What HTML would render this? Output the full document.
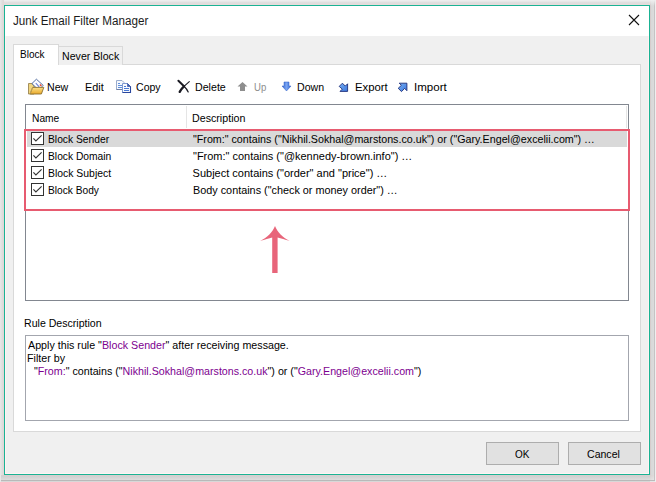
<!DOCTYPE html>
<html><head><meta charset="utf-8"><style>
html,body{margin:0;padding:0;}
body{width:656px;height:482px;position:relative;overflow:hidden;background:#e6e6e6;font-family:"Liberation Sans", sans-serif;}
.a{position:absolute;}
.t{position:absolute;white-space:pre;font-family:"Liberation Sans", sans-serif;}
</style></head><body>
<!-- shadow bands -->
<div class="a" style="left:0;top:0;width:656px;height:482px;background:#e4e4e4;"></div>
<div class="a" style="left:0;top:0;width:656px;height:5px;background:linear-gradient(#efefef,#ebebeb 20%,#e3e3e3 40%,#dcdcdc 60%,#e6dcdc 80%);"></div>
<div class="a" style="left:0;top:0;width:4px;height:482px;background:linear-gradient(90deg,#e8e8e8,#e4e4e4 25%,#dfdfdf 50%,#e0d8d8 75%);"></div>
<div class="a" style="left:650px;top:0;width:6px;height:482px;background:linear-gradient(90deg,#d6cccc 0,#d6cccc 16%,#d8d8d8 16%,#dcdcdc 66%,#c4c4c4 66%,#c4c4c4 83%,#efefef 83%);"></div>
<div class="a" style="left:650px;top:0;width:6px;height:6px;background:linear-gradient(rgba(239,239,239,1),rgba(239,239,239,0));"></div>
<div class="a" style="left:0;top:475px;width:650px;height:7px;background:linear-gradient(#d8cfcf 0,#d8cfcf 14%,#d0d0d0 14%,#d6d6d6 43%,#dcdcdc 71%,#b9b9b9 71%,#b9b9b9 86%,#d8d8d8 86%);"></div>
<div class="a" style="left:650px;top:475px;width:4px;height:5px;background:linear-gradient(135deg,#d8d0d0,#e6e6e6);"></div>
<div class="a" style="left:650px;top:480px;width:5px;height:1px;background:#bbbbbb;"></div>
<div class="a" style="left:650px;top:481px;width:6px;height:1px;background:#e6e6e6;"></div>
<div class="a" style="left:655px;top:475px;width:1px;height:7px;background:#f0f0f0;"></div>
<div class="a" style="left:0;top:475px;width:1px;height:7px;background:#e8e8e8;"></div>
<!-- window -->
<div class="a" style="left:4px;top:5px;width:644px;height:468px;border:1px solid #1ab394;background:#f0f0f0;"></div>
<div class="a" style="left:5px;top:6px;width:642px;height:466px;border:1px solid #fff3f3;"></div>
<div class="a" style="left:5px;top:6px;width:644px;height:30px;background:#fff;"></div>
<!-- tab panel -->
<div class="a" style="left:13px;top:64px;width:626px;height:366px;border:1px solid #d9d9d9;background:#fff;"></div>
<!-- never block tab -->
<div class="a" style="left:58px;top:46px;width:63px;height:18px;border:1px solid #d9d9d9;border-bottom:none;background:#f0f0f0;"></div>
<!-- block tab (selected) -->
<div class="a" style="left:13px;top:44px;width:44px;height:20px;border:1px solid #d9d9d9;border-bottom:none;background:#fff;"></div>
<!-- list box -->
<div class="a" style="left:25px;top:104px;width:602px;height:195px;border:1px solid #828790;background:#fff;"></div>
<div class="a" style="left:186px;top:106px;width:1px;height:22px;background:#e5e5e5;"></div>
<div class="a" style="left:626px;top:106px;width:1px;height:22px;background:#e5e5e5;"></div>
<!-- selected row -->
<div class="a" style="left:27px;top:131px;width:600px;height:16px;background:#d9d9d9;"></div>
<!-- red highlight -->
<div class="a" style="left:24px;top:129px;width:602px;height:78px;border:2px solid #e75b70;"></div>
<!-- rule description box -->
<div class="a" style="left:25px;top:335px;width:602px;height:84px;border:1px solid #a3a6ae;background:#fff;"></div>
<!-- buttons -->
<div class="a" style="left:486px;top:442px;width:71px;height:21px;border:1px solid #adadad;background:#e1e1e1;"></div>
<div class="a" style="left:568px;top:442px;width:71px;height:21px;border:1px solid #adadad;background:#e1e1e1;"></div>
<svg class="a" style="left:31px;top:132px" width="13" height="13" viewBox="0 0 13 13"><rect x="0.5" y="0.5" width="12" height="12" fill="#fff" stroke="#333" stroke-width="1"/><path d="M2.4 6.4 L4.9 9 L10.6 3.3" fill="none" stroke="#333" stroke-width="1.15"/></svg>
<svg class="a" style="left:31px;top:149px" width="13" height="13" viewBox="0 0 13 13"><rect x="0.5" y="0.5" width="12" height="12" fill="#fff" stroke="#333" stroke-width="1"/><path d="M2.4 6.4 L4.9 9 L10.6 3.3" fill="none" stroke="#333" stroke-width="1.15"/></svg>
<svg class="a" style="left:31px;top:166px" width="13" height="13" viewBox="0 0 13 13"><rect x="0.5" y="0.5" width="12" height="12" fill="#fff" stroke="#333" stroke-width="1"/><path d="M2.4 6.4 L4.9 9 L10.6 3.3" fill="none" stroke="#333" stroke-width="1.15"/></svg>
<svg class="a" style="left:31px;top:183px" width="13" height="13" viewBox="0 0 13 13"><rect x="0.5" y="0.5" width="12" height="12" fill="#fff" stroke="#333" stroke-width="1"/><path d="M2.4 6.4 L4.9 9 L10.6 3.3" fill="none" stroke="#333" stroke-width="1.15"/></svg>

<!-- New: folder with envelope -->
<svg class="a" style="left:26px;top:77px" width="20" height="20" viewBox="0 0 20 20">
 <defs><linearGradient id="gf" x1="0" y1="0" x2="0" y2="1"><stop offset="0" stop-color="#fbe08a"/><stop offset="1" stop-color="#e9a92a"/></linearGradient></defs>
 <path d="M2.5 6.5 L6.5 6.5 L7.5 7.5 L8 7.5 L8 17 L2.5 17 Z" fill="#f1d67e" stroke="#9c8650" stroke-width="0.9"/>
 <path d="M10.4 2.2 L17.2 8.4 L12.6 13 L5.9 6.6 Z" fill="#fbfcff" stroke="#34548f" stroke-width="0.85"/>
 <path d="M9.8 6.2 L13.2 9.8" stroke="#6e84d6" stroke-width="1.2"/>
 <path d="M13.9 7.6 L15.4 9" stroke="#e2452f" stroke-width="1.4"/>
 <path d="M4.1 17 L15.4 17 L17.8 10.4 L6.6 10.4 Z" fill="url(#gf)" stroke="#8d7130" stroke-width="0.9"/>
 <path d="M6.6 10.4 L4 16.8" stroke="#c9a860" stroke-width="0.8"/>
</svg>
<!-- Copy -->
<svg class="a" style="left:112px;top:77px" width="24" height="20" viewBox="0 0 24 20">
 <path d="M4.5 12.5 V3.5 H10 L12 5.5 V12.5 Z" fill="#f5f8fd" stroke="#9aaccc" stroke-width="1"/>
 <path d="M4.5 12.5 H10.5" stroke="#6d7fa6" stroke-width="1"/>
 <path d="M6 6.5 H8 M6 8.5 H10.5 M6 10.5 H10.5" stroke="#5f8fdc" stroke-width="1"/>
 <path d="M10.5 15.5 V6.5 H15.5 L18.5 9.5 V15.5 Z" fill="#f8fafe" stroke="#7e98d0" stroke-width="1"/>
 <path d="M10.5 15.5 H18.5 V9.5" fill="none" stroke="#2a479e" stroke-width="1.1"/>
 <path d="M15.5 6.5 V9.5 H18.5 Z" fill="#3a5cb0" stroke="#2a479e" stroke-width="0.6"/>
 <path d="M12 9.5 H14 M12 11.5 H17 M12 13.5 H17" stroke="#4a7ad6" stroke-width="1"/>
</svg>
<!-- Delete X -->
<svg class="a" style="left:174px;top:77px" width="20" height="20" viewBox="0 0 20 20">
 <path d="M4.4 3.8 L10 9.3" stroke="#1a1a22" stroke-width="2" fill="none" stroke-linecap="round"/>
 <path d="M10 9.3 C11.8 11 13.2 12.8 14.2 15" stroke="#1a1a22" stroke-width="1.2" fill="none" stroke-linecap="round"/>
 <path d="M15.3 4.6 L10 9.3" stroke="#1a1a22" stroke-width="1.1" fill="none" stroke-linecap="round"/>
 <path d="M10 9.3 C8.3 10.8 6.8 12.8 5.7 14.9" stroke="#1a1a22" stroke-width="2.3" fill="none" stroke-linecap="round"/>
</svg>
<!-- Up gray -->
<svg class="a" style="left:237px;top:81px" width="11" height="11" viewBox="0 0 11 11">
 <path d="M5.5 1 L10.5 5.5 L8 5.5 L8 10 L3 10 L3 5.5 L0.5 5.5 Z" fill="#8e8e8e"/>
</svg>
<!-- Down blue -->
<svg class="a" style="left:282px;top:81px" width="10" height="11" viewBox="0 0 10 11">
 <defs><linearGradient id="gd" x1="0" y1="0" x2="1" y2="0"><stop offset="0" stop-color="#3565cf"/><stop offset="0.5" stop-color="#78a4f2"/><stop offset="1" stop-color="#3565cf"/></linearGradient></defs>
 <path d="M2 1 H7 V5 H9 L4.5 10 L0 5 H2 Z" fill="url(#gd)" stroke="#2f5fc4" stroke-width="0.5"/>
</svg>
<!-- Export -->
<svg class="a" style="left:338px;top:82px" width="12" height="12" viewBox="0 0 12 12">
 <defs><linearGradient id="ge" x1="0" y1="0" x2="1" y2="1"><stop offset="0" stop-color="#78b0f4"/><stop offset="1" stop-color="#3a76dc"/></linearGradient></defs>
 <path d="M1.2 4.4 L4.4 1.2 L7.3 4.1 L9.6 1.8 L9.6 9.4 L2 9.4 L4.3 7.1 Z" fill="url(#ge)" stroke="#1f2f78" stroke-width="0.9" stroke-linejoin="miter"/>
</svg>
<!-- Import -->
<svg class="a" style="left:397px;top:82px" width="12" height="12" viewBox="0 0 12 12">
 <path d="M2.2 1.2 L9.9 1.2 L9.9 8.7 L7.6 6.4 L4.5 9.6 L1.2 6.3 L4.4 3.3 Z" fill="url(#ge)" stroke="#1f2f78" stroke-width="0.9"/>
</svg>
<!-- close X -->
<svg class="a" style="left:628px;top:14px" width="12" height="12" viewBox="0 0 12 12">
 <path d="M1 1 L11 11 M11 1 L1 11" stroke="#111" stroke-width="1.1"/>
</svg>
<!-- red arrow -->
<svg class="a" style="left:255px;top:222px" width="40" height="56" viewBox="0 0 40 56">
 <path d="M20 4 C17.5 10 12.5 15.5 5.2 18.8 C10 17.8 14 16 17.2 15.4 L17.2 51 L22.6 51 L22.6 15.4 C26 16 30 17.8 34.6 18.8 C27.5 15.5 22.5 10 20 4 Z" fill="#e8657a"/>
</svg>
<div class="t" style="left:13.00px;top:15.34px;font-size:12px;line-height:12px;color:#1b1b1b;transform:scaleX(0.9710);transform-origin:0 0;">Junk Email Filter Manager</div>
<div class="t" style="left:20.00px;top:48.69px;font-size:11px;line-height:11px;color:#000;transform:scaleX(0.9100);transform-origin:0 0;">Block</div>
<div class="t" style="left:62.00px;top:51.19px;font-size:11px;line-height:11px;color:#000;transform:scaleX(0.9650);transform-origin:0 0;">Never Block</div>
<div class="t" style="left:47.00px;top:82.49px;font-size:11px;line-height:11px;color:#000;transform:scaleX(0.9670);transform-origin:0 0;">New</div>
<div class="t" style="left:84.70px;top:82.49px;font-size:11px;line-height:11px;color:#000;transform:scaleX(0.9900);transform-origin:0 0;">Edit</div>
<div class="t" style="left:135.60px;top:82.49px;font-size:11px;line-height:11px;color:#000;transform:scaleX(0.9600);transform-origin:0 0;">Copy</div>
<div class="t" style="left:194.70px;top:82.49px;font-size:11px;line-height:11px;color:#000;transform:scaleX(0.9680);transform-origin:0 0;">Delete</div>
<div class="t" style="left:253.80px;top:82.49px;font-size:11px;line-height:11px;color:#8d8d8d;transform:scaleX(0.8700);transform-origin:0 0;">Up</div>
<div class="t" style="left:297.00px;top:82.49px;font-size:11px;line-height:11px;color:#000;transform:scaleX(0.9630);transform-origin:0 0;">Down</div>
<div class="t" style="left:354.60px;top:82.49px;font-size:11px;line-height:11px;color:#000;transform:scaleX(1.0300);transform-origin:0 0;">Export</div>
<div class="t" style="left:414.00px;top:82.49px;font-size:11px;line-height:11px;color:#000;transform:scaleX(1.0500);transform-origin:0 0;">Import</div>
<div class="t" style="left:32.00px;top:113.49px;font-size:11px;line-height:11px;color:#000;transform:scaleX(0.9300);transform-origin:0 0;">Name</div>
<div class="t" style="left:192.00px;top:113.49px;font-size:11px;line-height:11px;color:#000;transform:scaleX(0.9700);transform-origin:0 0;">Description</div>
<div class="t" style="left:48.00px;top:134.39px;font-size:11px;line-height:11px;color:#000;transform:scaleX(0.9350);transform-origin:0 0;">Block Sender</div>
<div class="t" style="left:192.60px;top:134.39px;font-size:11px;line-height:11px;color:#000;transform:scaleX(0.9730);transform-origin:0 0;">"From:" contains ("Nikhil.Sokhal@marstons.co.uk") or ("Gary.Engel@excelii.com") …</div>
<div class="t" style="left:48.00px;top:151.39px;font-size:11px;line-height:11px;color:#000;transform:scaleX(0.9330);transform-origin:0 0;">Block Domain</div>
<div class="t" style="left:192.60px;top:151.39px;font-size:11px;line-height:11px;color:#000;transform:scaleX(0.9970);transform-origin:0 0;">"From:" contains ("@kennedy-brown.info") …</div>
<div class="t" style="left:48.00px;top:168.39px;font-size:11px;line-height:11px;color:#000;transform:scaleX(0.9470);transform-origin:0 0;">Block Subject</div>
<div class="t" style="left:192.60px;top:168.39px;font-size:11px;line-height:11px;color:#000;">Subject contains ("order" and "price") …</div>
<div class="t" style="left:48.00px;top:185.39px;font-size:11px;line-height:11px;color:#000;transform:scaleX(0.9260);transform-origin:0 0;">Block Body</div>
<div class="t" style="left:192.60px;top:185.39px;font-size:11px;line-height:11px;color:#000;transform:scaleX(0.9850);transform-origin:0 0;">Body contains ("check or money order") …</div>
<div class="t" style="left:24.00px;top:318.39px;font-size:11px;line-height:11px;color:#000;transform:scaleX(0.9620);transform-origin:0 0;">Rule Description</div>
<div class="t" style="left:28.00px;top:339.99px;font-size:11px;line-height:11px;color:#000;transform:scaleX(0.9720);transform-origin:0 0;">Apply this rule "<span style="color:#7d0090">Block Sender</span>" after receiving message.</div>
<div class="t" style="left:27.00px;top:352.99px;font-size:11px;line-height:11px;color:#000;transform:scaleX(0.9720);transform-origin:0 0;">Filter by</div>
<div class="t" style="left:33.50px;top:366.09px;font-size:11px;line-height:11px;color:#000;transform:scaleX(0.9710);transform-origin:0 0;">"<span style="color:#7d0090">From:</span>" contains ("<span style="color:#7d0090">Nikhil.Sokhal@marstons.co.uk</span>") or ("<span style="color:#7d0090">Gary.Engel@excelii.com</span>")</div>
<div class="t" style="left:515.00px;top:448.69px;font-size:11px;line-height:11px;color:#000;transform:scaleX(0.9060);transform-origin:0 0;">OK</div>
<div class="t" style="left:587.00px;top:448.69px;font-size:11px;line-height:11px;color:#000;transform:scaleX(0.9600);transform-origin:0 0;">Cancel</div>

</body></html>
